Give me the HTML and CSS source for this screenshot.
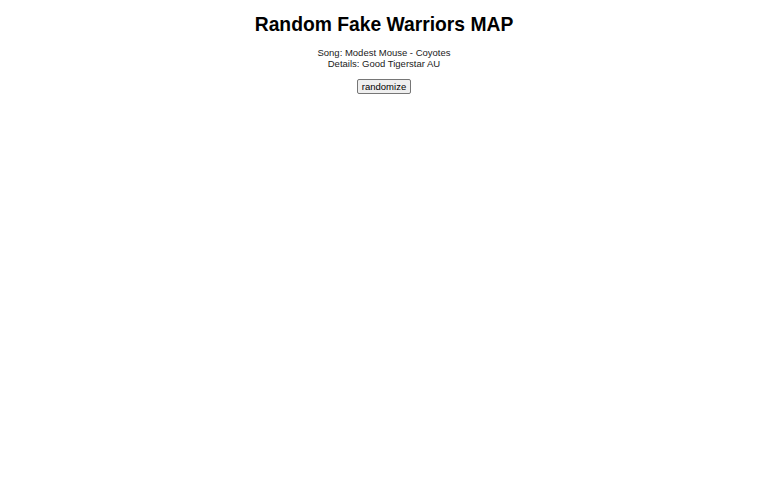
FILE: index.html
```html
<!DOCTYPE html>
<html>
<head>
<meta charset="utf-8">
<title>Random Fake Warriors MAP</title>
<link rel="stylesheet" href="styles.css">
</head>
<body>
<main class="page">
  <h1 class="title">Random Fake Warriors MAP</h1>
  <div class="info">
    <div class="line">Song: Modest Mouse - Coyotes</div>
    <div class="line">Details: Good Tigerstar AU</div>
  </div>
  <button class="randomize" type="button">randomize</button>
</main>
</body>
</html>
```
FILE: styles.css
```css
body {
  margin: 8px;
  font-family: "Liberation Sans", Arial, sans-serif;
  color: #000;
  background: #fff;
}

.page {
  display: flex;
  flex-direction: column;
  align-items: center;
  text-align: center;
}

.title {
  font-size: 19.3px;
  font-weight: bold;
  margin: 5px 0 0;
  line-height: 23px;
}

.info {
  margin-top: 11px;
  font-size: 9.5px;
  line-height: 11px;
  color: #1a1a1a;
}

.randomize {
  margin-top: 10px;
  font-family: "Liberation Sans", Arial, sans-serif;
  font-size: 9.5px;
  line-height: 11px;
  padding: 1px 4px;
  background: #efefef;
  border: 1px solid #767676;
  border-radius: 2px;
  color: #000;
}
```
